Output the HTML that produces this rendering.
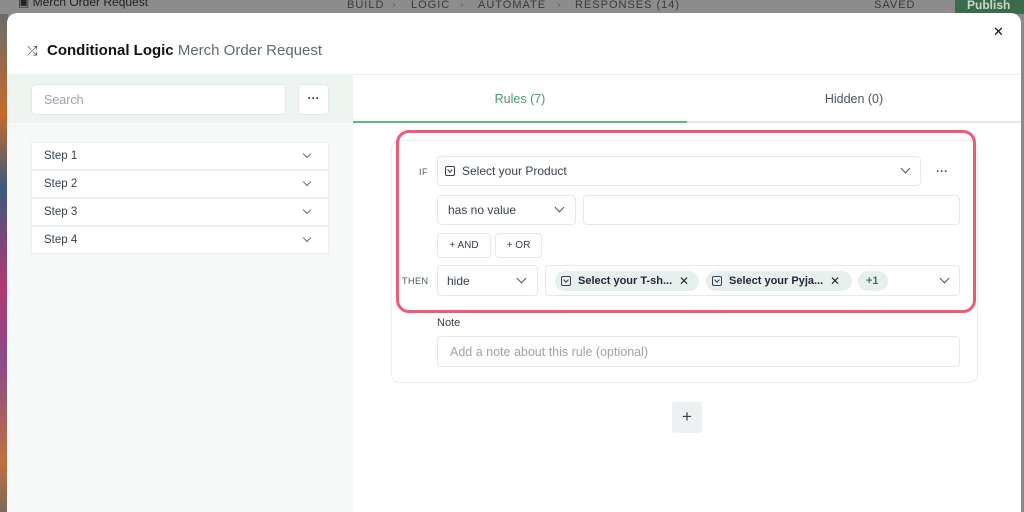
<!DOCTYPE html>
<html><head><meta charset="utf-8">
<style>
*{box-sizing:border-box;margin:0;padding:0}
html,body{width:1024px;height:512px;overflow:hidden}
body{position:relative;background:#8a8a8a;font-family:"Liberation Sans",sans-serif;color:#1f2937}
.abs{position:absolute}
.topbar{left:0;top:0;width:1024px;height:14px;background:#8c8c8c}
.topbar span{position:absolute;top:-1px;font-size:11px;color:#3a3a3a;letter-spacing:1px}
.leftstrip{left:0;top:14px;width:8px;height:498px;background:linear-gradient(#6b6b6b,#c66a2a 20%,#3b5a80 35%,#b03a70 55%,#8a4a8a 70%,#c07040 90%,#7a6a5a)}
.modal{left:7px;top:13px;width:1014px;height:499px;background:#fff;border-radius:10px 10px 0 0;overflow:hidden}
.inp{position:absolute;border:1px solid #e6e9ec;border-radius:4px;background:#fff;font-size:12px;color:#374151}
.chev{position:absolute;width:7px;height:7px;border-right:1.5px solid #4b5563;border-bottom:1.5px solid #4b5563;transform:rotate(45deg)}
.chip{position:absolute;top:5px;height:20px;border-radius:10px;background:#e6f0ec;font-size:11px;font-weight:bold;color:#1f2937;line-height:20px;padding-left:23px}
.cb{position:absolute;width:10px;height:10px;border:1.3px solid #374151;border-radius:2px}
.cb:after{content:"";position:absolute;left:2px;top:1px;width:3px;height:3px;border-right:1.2px solid #374151;border-bottom:1.2px solid #374151;transform:rotate(45deg)}
.step{position:absolute;left:24px;width:298px;height:28px;border:1px solid #eceff1;background:#fff;font-size:11.5px;line-height:27px;padding-left:12px;color:#374151}
.step .chev{left:272px;top:8px;width:6px;height:6px;border-color:#6b7280;border-width:0 1px 1px 0}
</style></head><body>
<div class="abs topbar">
 <span style="left:18px;letter-spacing:0;font-size:12px;top:-5px;color:#222">▣ Merch Order Request</span>
 <span style="left:347px">BUILD</span><span style="left:392px;color:#666">›</span>
 <span style="left:411px">LOGIC</span><span style="left:460px;color:#666">›</span>
 <span style="left:478px">AUTOMATE</span><span style="left:557px;color:#666">›</span>
 <span style="left:575px">RESPONSES (14)</span>
 <span style="left:874px">SAVED</span>
 <span style="left:955px;width:69px;height:14px;background:#3b6b4a;top:0;color:#c9d8cc;font-weight:bold;font-size:12px;letter-spacing:0;padding-left:12px;line-height:10px">Publish</span>
</div>
<div class="abs leftstrip"></div>
<div class="abs modal">
 <div class="abs" style="left:986px;top:11px;font-size:13px;color:#111">✕</div>
 <div class="abs" style="left:20px;top:30px;font-size:13px;color:#374151">⤮</div>
 <div class="abs" style="left:40px;top:29px;font-size:15px;font-weight:bold;color:#111">Conditional Logic <span style="font-weight:normal;color:#5b6b7b">Merch Order Request</span></div>
 <div class="abs" style="left:0;top:61px;width:1014px;height:1px;background:#eceef0"></div>
 <div class="abs" style="left:0;top:62px;width:346px;height:460px;background:#f6f9f8"></div>
 <div class="abs" style="left:0;top:62px;width:346px;height:48px;background:#eef5f1"></div>
 <div class="inp" style="left:24px;top:71px;width:255px;height:31px;padding:8px 12px;color:#9ca3af;font-size:12.5px">Search</div>
 <div class="inp" style="left:291px;top:71px;width:31px;height:31px;text-align:center;line-height:26px;font-weight:bold">···</div>
 <div class="step" style="top:129px">Step 1<div class="chev"></div></div>
 <div class="step" style="top:157px">Step 2<div class="chev"></div></div>
 <div class="step" style="top:185px">Step 3<div class="chev"></div></div>
 <div class="step" style="top:213px">Step 4<div class="chev"></div></div>
 <div class="abs" style="left:346px;top:79px;width:334px;text-align:center;font-size:12.5px;color:#3f9f6a">Rules (7)</div>
 <div class="abs" style="left:680px;top:79px;width:334px;text-align:center;font-size:12.5px;color:#4b5563">Hidden (0)</div>
 <div class="abs" style="left:346px;top:108px;width:668px;height:2px;background:#e5e7eb"></div>
 <div class="abs" style="left:346px;top:108px;width:334px;height:2px;background:#5fb884"></div>
 <div class="abs" style="left:384px;top:127px;width:587px;height:243px;border:1px solid #eceef0;border-radius:9px"></div>
 <div class="abs" style="left:389px;top:117px;width:580px;height:183px;border:3px solid #ef5b74;border-radius:13px"></div>
 <div class="abs" style="left:412px;top:154px;font-size:9px;color:#4b5563;letter-spacing:.5px">IF</div>
 <div class="inp" style="left:430px;top:143px;width:484px;height:30px">
  <div class="cb" style="left:7px;top:9px"></div>
  <span class="abs" style="left:24px;top:7px">Select your Product</span>
  <div class="chev" style="left:464px;top:8px"></div></div>
 <div class="abs" style="left:929px;top:151px;font-size:12px;font-weight:bold;color:#4b5563">···</div>
 <div class="inp" style="left:430px;top:182px;width:139px;height:30px"><span class="abs" style="left:10px;top:7px">has no value</span><div class="chev" style="left:118px;top:8px"></div></div>
 <div class="inp" style="left:576px;top:182px;width:377px;height:30px"></div>
 <div class="inp" style="left:430px;top:220px;width:54px;height:25px;font-size:10px;line-height:23px;text-align:center">+ AND</div>
 <div class="inp" style="left:488px;top:220px;width:47px;height:25px;font-size:10px;line-height:23px;text-align:center">+ OR</div>
 <div class="abs" style="left:395px;top:263px;font-size:9px;color:#4b5563;letter-spacing:.5px">THEN</div>
 <div class="inp" style="left:430px;top:252px;width:101px;height:31px"><span class="abs" style="left:9px;top:8px">hide</span><div class="chev" style="left:80px;top:9px"></div></div>
 <div class="inp" style="left:538px;top:252px;width:415px;height:31px">
  <div class="chip" style="left:9px;width:144px">Select your T-sh...<div class="cb" style="left:6px;top:5px"></div><span class="abs" style="left:124px;top:0;font-weight:normal;font-size:12px">✕</span></div>
  <div class="chip" style="left:160px;width:146px">Select your Pyja...<div class="cb" style="left:6px;top:5px"></div><span class="abs" style="left:124px;top:0;font-weight:normal;font-size:12px">✕</span></div>
  <div class="chip" style="left:312px;width:30px;padding-left:8px;color:#3b7a52">+1</div>
  <div class="chev" style="left:395px;top:9px"></div></div>
 <div class="abs" style="left:430px;top:304px;font-size:11px;color:#374151">Note</div>
 <div class="inp" style="left:430px;top:323px;width:523px;height:31px;padding:8px 12px;color:#9ca3af;font-size:12.5px">Add a note about this rule (optional)</div>
 <div class="abs" style="left:665px;top:389px;width:30px;height:31px;background:#eef0f2;border-radius:3px;text-align:center;line-height:30px;font-size:17px;color:#374151">+</div>
</div>
</body></html>
